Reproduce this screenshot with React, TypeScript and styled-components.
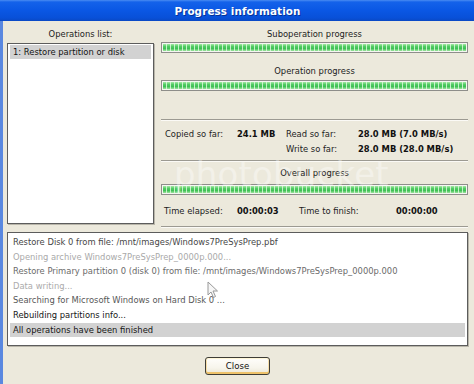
import React from "react";
import styled, { createGlobalStyle } from "styled-components";

const Global = createGlobalStyle`
  html, body { margin: 0; padding: 0; background: #ece9dc; overflow: hidden; }
  * { box-sizing: border-box; }
`;

const Window = styled.div`
  position: relative;
  width: 474px;
  height: 384px;
  overflow: hidden;
  display: flex;
  flex-direction: column;
  background: #ece9dc;
  font-family: "DejaVu Sans", "Liberation Sans", sans-serif;
  font-size: 8.4px;
  color: #1e1e1e;
`;

const TitleBar = styled.div`
  height: 21px;
  flex: none;
  display: flex;
  align-items: center;
  justify-content: center;
  background: linear-gradient(180deg, #4a8cf2 0px, #1462ea 2px, #0a57e4 50%, #0850d8 85%, #0a48c4 100%);
`;

const Title = styled.div`
  color: #fff;
  font-weight: bold;
  font-size: 10.4px;
  letter-spacing: 0.1px;
  text-shadow: 1px 1px 0 rgba(0, 20, 90, 0.55);
  padding-left: 1px;
`;

const Body = styled.div`
  flex: 1;
  display: flex;
  flex-direction: column;
  border-left: 3px solid #5a88e0;
  padding: 6px 6px 0 4px;
`;

const TopSection = styled.div`
  display: flex;
  align-items: flex-start;
  gap: 7px;
`;

const LeftColumn = styled.div`
  width: 147px;
  flex: none;
  display: flex;
  flex-direction: column;
`;

const RightColumn = styled.div`
  flex: 1;
  display: flex;
  flex-direction: column;
`;

const Label = styled.div<{ $mt?: number }>`
  height: 14px;
  line-height: 14px;
  text-align: center;
  color: #222;
  margin-top: ${(p) => p.$mt ?? 0}px;
`;

const ListBox = styled.div<{ $h: number; $mt: number }>`
  height: ${(p) => p.$h}px;
  margin-top: ${(p) => p.$mt}px;
  background: #fff;
  border: 1px solid #5c5c5c;
  box-shadow: 1px 1px 0 #b9b6aa;
  padding: 1px 2px;
  display: flex;
  flex-direction: column;
`;

const Item = styled.div<{ $selected?: boolean; $tone?: string; $lh: number }>`
  height: ${(p) => p.$lh}px;
  line-height: ${(p) => p.$lh}px;
  padding-left: 3px;
  white-space: nowrap;
  overflow: hidden;
  color: ${(p) => p.$tone ?? "#141414"};
  background: ${(p) => (p.$selected ? "#d2d2d2" : "transparent")};
`;

const Bar = styled.div<{ $mt: number }>`
  height: 11px;
  margin-top: ${(p) => p.$mt}px;
  border: 1px solid #8e8e8a;
  background: #f6f6f2;
  padding: 1px;
`;

const BarFill = styled.div`
  height: 100%;
  background:
    repeating-linear-gradient(90deg, transparent 0px, transparent 3px, rgba(220, 248, 220, 0.85) 3px, rgba(220, 248, 220, 0.85) 4px),
    linear-gradient(180deg, #a6e9a6 0%, #52cc64 35%, #3fc055 65%, #9ee49e 100%);
`;

const Separator = styled.div<{ $mt: number }>`
  margin-top: ${(p) => p.$mt}px;
  height: 2px;
  border-top: 1px solid #9c9a92;
  border-bottom: 1px solid #fbfaf6;
`;

const InfoRow = styled.div<{ $cols: string; $pl: number; $mt?: number }>`
  display: grid;
  grid-template-columns: ${(p) => p.$cols};
  padding-left: ${(p) => p.$pl}px;
  margin-top: ${(p) => p.$mt ?? 0}px;
  height: 15px;
  line-height: 15px;
  white-space: nowrap;
  color: #222;
`;

const Value = styled.span`
  font-weight: bold;
  color: #111;
`;

const LogBox = styled(ListBox)`
  padding: 2px 2px 0 2px;
`;

const Footer = styled.div`
  display: flex;
  justify-content: center;
  padding-top: 11px;
`;

const Button = styled.button`
  width: 65px;
  height: 18px;
  padding: 0;
  font-family: "DejaVu Sans", "Liberation Sans", sans-serif;
  font-size: 8.6px;
  color: #111;
  border: 1px solid #3e3d36;
  border-radius: 3px;
  background: linear-gradient(180deg, #fffefb 0%, #f7f5ec 60%, #ebe7d6 100%);
  box-shadow: inset 0 -2px 0 #eec26a, inset 0 1px 0 #fff7d8, inset 1px 0 0 #f6deaa, inset -1px 0 0 #f6deaa;
`;

const Watermark = styled.div`
  position: absolute;
  left: 174px;
  top: 157px;
  font-family: "DejaVu Sans", sans-serif;
  font-size: 34px;
  line-height: 34px;
  color: rgba(255, 255, 255, 0.38);
  pointer-events: none;
  letter-spacing: 0.2px;
`;

const Cursor = styled.svg`
  position: absolute;
  left: 207px;
  top: 281px;
  opacity: 0.75;
`;

const logLines: { text: string; tone: string; selected?: boolean }[] = [
  { text: "Restore Disk 0 from file: /mnt/images/Windows7PreSysPrep.pbf", tone: "#464646" },
  { text: "Opening archive Windows7PreSysPrep_0000p.000...", tone: "#a9a9a9" },
  { text: "Restore Primary partition 0 (disk 0) from file: /mnt/images/Windows7PreSysPrep_0000p.000", tone: "#6a6a6a" },
  { text: "Data writing...", tone: "#ababab" },
  { text: "Searching for Microsoft Windows on Hard Disk 0 ...", tone: "#575757" },
  { text: "Rebuilding partitions info...", tone: "#151515" },
  { text: "All operations have been finished", tone: "#151515", selected: true },
];

const ProgressBar = ({ mt }: { mt: number }) => (
  <Bar $mt={mt}>
    <BarFill />
  </Bar>
);

export default function App() {
  return (
    <>
      <Global />
      <Window>
        <TitleBar>
          <Title>Progress information</Title>
        </TitleBar>
        <Body>
          <TopSection>
            <LeftColumn>
              <Label>Operations list:</Label>
              <ListBox $h={181} $mt={2}>
                <Item $lh={14} $selected>1: Restore partition or disk</Item>
              </ListBox>
            </LeftColumn>
            <RightColumn>
              <Label>Suboperation progress</Label>
              <ProgressBar mt={1} />
              <Label $mt={11}>Operation progress</Label>
              <ProgressBar mt={2} />
              <Separator $mt={28} />
              <InfoRow $cols="72px 49px 72px 1fr" $pl={4} $mt={6}>
                <span>Copied so far:</span>
                <Value>24.1 MB</Value>
                <span>Read so far:</span>
                <Value>28.0 MB (7.0 MB/s)</Value>
              </InfoRow>
              <InfoRow $cols="72px 49px 72px 1fr" $pl={4}>
                <span />
                <span />
                <span>Write so far:</span>
                <Value>28.0 MB (28.0 MB/s)</Value>
              </InfoRow>
              <Separator $mt={3} />
              <Label $mt={4}>Overall progress</Label>
              <ProgressBar mt={4} />
              <InfoRow $cols="73px 62px 97px 1fr" $pl={3} $mt={9}>
                <span>Time elapsed:</span>
                <Value>00:00:03</Value>
                <span>Time to finish:</span>
                <Value>00:00:00</Value>
              </InfoRow>
              <Separator $mt={7} />
            </RightColumn>
          </TopSection>
          <LogBox $h={114} $mt={4}>
            {logLines.map((l) => (
              <Item key={l.text} $lh={14.6} $tone={l.tone} $selected={l.selected}>
                {l.text}
              </Item>
            ))}
          </LogBox>
          <Footer>
            <Button>Close</Button>
          </Footer>
        </Body>
        <Watermark>photobucket</Watermark>
        <Cursor width="12" height="18" viewBox="0 0 12 18">
          <path d="M1 1 L1 14 L4 11 L6.5 16.5 L8.5 15.5 L6 10 L10.5 10 Z" fill="#f4f4f4" stroke="#777" strokeWidth="1" strokeLinejoin="round" />
        </Cursor>
      </Window>
    </>
  );
}
